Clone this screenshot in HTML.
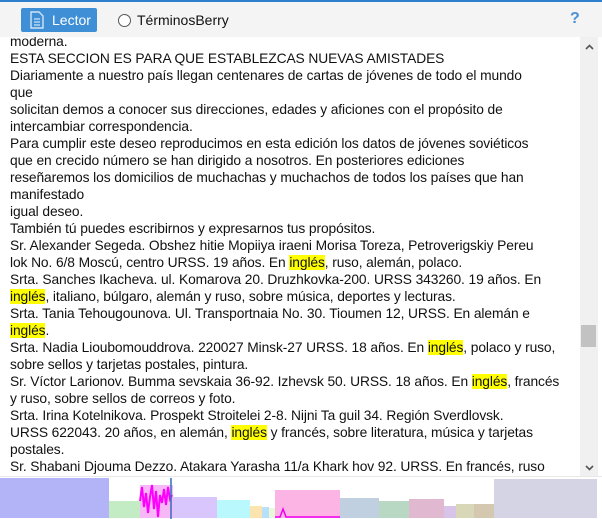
<!DOCTYPE html>
<html><head><meta charset="utf-8"><style>
*{margin:0;padding:0;box-sizing:border-box}
body{width:602px;height:518px;overflow:hidden;background:#fff;font-family:"Liberation Sans",Arial,sans-serif;position:relative}
#top{position:absolute;left:0;top:0;width:602px;height:2px;background:#2f7fcf;z-index:3}
#bar{position:absolute;left:0;top:2px;width:602px;height:35px;background:#f4f4f4;z-index:2}
#btn{position:absolute;left:21px;top:6px;width:76px;height:24px;background:#3e8fd6;border-radius:2px;color:#fff;font-size:14px}
#btn span{position:absolute;left:31px;top:4px}
#radio{position:absolute;left:118px;top:12px;width:13px;height:13px;border:1.5px solid #555;border-radius:50%;background:#fff}
#tb{position:absolute;left:137px;top:10px;font-size:14px;color:#111}
#q{position:absolute;left:570px;top:8px;font-size:16px;font-weight:bold;color:#4a90d9}
#txt{position:absolute;left:10px;top:33px;width:570px;font-size:13.8px;letter-spacing:-0.1px;line-height:17px;color:#111;white-space:nowrap}
.h{background:#ffff00}
#sb{position:absolute;left:580px;top:37px;width:18px;height:439px;background:#f0f0f0}
#thumb{position:absolute;left:581px;top:325px;width:15px;height:22px;background:#c2c2c2}
#bot{position:absolute;left:0;top:476px;width:602px;height:42px;background:#fff;border-top:1px solid #e8e8e8}
.b{position:absolute;bottom:0}
</style></head><body>
<div id="top"></div>
<div id="bar">
<div id="btn"><svg style="position:absolute;left:9px;top:3px" width="14" height="18" viewBox="0 0 14 18"><path d="M1 1h8l4 4v12H1z" fill="none" stroke="#cfe3f5" stroke-width="1.4"/><path d="M4 8h6M4 11h6M4 14h6" stroke="#cfe3f5" stroke-width="1.2"/></svg><span>Lector</span></div>
<div id="radio"></div><div id="tb">TérminosBerry</div>
<div id="q">?</div>
</div>
<div id="txt">
moderna.<br>
ESTA SECCION ES PARA QUE ESTABLEZCAS NUEVAS AMISTADES<br>
Diariamente a nuestro país llegan centenares de cartas de jóvenes de todo el mundo<br>
que<br>
solicitan demos a conocer sus direcciones, edades y aficiones con el propósito de<br>
intercambiar correspondencia.<br>
Para cumplir este deseo reproducimos en esta edición los datos de jóvenes soviéticos<br>
que en crecido número se han dirigido a nosotros. En posteriores ediciones<br>
reseñaremos los domicilios de muchachas y muchachos de todos los países que han<br>
manifestado<br>
igual deseo.<br>
También tú puedes escribirnos y expresarnos tus propósitos.<br>
Sr. Alexander Segeda. Obshez hitie Mopiiya iraeni Morisa Toreza, Petroverigskiy Pereu<br>
lok No. 6/8 Moscú, centro URSS. 19 años. En <span class="h">inglés</span>, ruso, alemán, polaco.<br>
Srta. Sanches Ikacheva. ul. Komarova 20. Druzhkovka-200. URSS 343260. 19 años. En<br>
<span class="h">inglés</span>, italiano, búlgaro, alemán y ruso, sobre música, deportes y lecturas.<br>
Srta. Tania Tehougounova. Ul. Transportnaia No. 30. Tioumen 12, URSS. En alemán e<br>
<span class="h">inglés</span>.<br>
Srta. Nadia Lioubomouddrova. 220027 Minsk-27 URSS. 18 años. En <span class="h">inglés</span>, polaco y ruso,<br>
sobre sellos y tarjetas postales, pintura.<br>
Sr. Víctor Larionov. Bumma sevskaia 36-92. Izhevsk 50. URSS. 18 años. En <span class="h">inglés</span>, francés<br>
y ruso, sobre sellos de correos y foto.<br>
Srta. Irina Kotelnikova. Prospekt Stroitelei 2-8. Nijni Ta guil 34. Región Sverdlovsk.<br>
URSS 622043. 20 años, en alemán, <span class="h">inglés</span> y francés, sobre literatura, música y tarjetas<br>
postales.<br>
Sr. Shabani Djouma Dezzo. Atakara Yarasha 11/a Khark hov 92. URSS. En francés, ruso<br>
</div>
<div id="sb"><svg style="position:absolute;left:5px;top:7px" width="9" height="6"><path d="M1 5l3.5-3.5L8 5" fill="none" stroke="#555" stroke-width="1.6"/></svg><svg style="position:absolute;left:5px;top:428px" width="9" height="6"><path d="M1 1l3.5 3.5L8 1" fill="none" stroke="#555" stroke-width="1.6"/></svg></div>
<div id="thumb"></div>
<div id="bot">
<div class="b" style="left:0;width:109px;height:40px;background:#b3b3f8"></div>
<div class="b" style="left:109px;width:31px;height:17px;background:#c4ecc4"></div>
<div class="b" style="left:140px;width:33px;height:33px;background:#f8b8f8"></div>
<div class="b" style="left:173px;width:44px;height:21px;background:#d9c6fc"></div>
<div class="b" style="left:217px;width:33px;height:18px;background:#b9f8fc"></div>
<div class="b" style="left:250px;width:12px;height:12px;background:#fce4b0"></div>
<div class="b" style="left:262px;width:7px;height:11px;background:#b8e0f8"></div>
<div class="b" style="left:269px;width:6px;height:10px;background:#e8f8d8"></div>
<div class="b" style="left:275px;width:65px;height:28px;background:#fcb4e4"></div>
<div class="b" style="left:340px;width:39px;height:20px;background:#c0d0e0"></div>
<div class="b" style="left:379px;width:30px;height:17px;background:#b8d8c4"></div>
<div class="b" style="left:409px;width:35px;height:19px;background:#e0b8d0"></div>
<div class="b" style="left:444px;width:12px;height:12px;background:#d8c4e8"></div>
<div class="b" style="left:456px;width:18px;height:14px;background:#d8d8b8"></div>
<div class="b" style="left:474px;width:20px;height:14px;background:#d4c8b0"></div>
<div class="b" style="left:494px;width:103px;height:39px;background:#d4d4e4"></div>
<svg style="position:absolute;left:0;top:0" width="602" height="42"><polyline points="140,24 142,10 144,30 146,16 148,36 150,20 152,8 154,32 156,14 158,40 160,18 162,26 164,12 166,28 168,10 170,22 172,18" fill="none" stroke="#f0f" stroke-width="2"/><polyline points="275,40 280,40 283,32 286,40 340,40" fill="none" stroke="#e0e" stroke-width="1.5"/><line x1="171" y1="1" x2="171" y2="42" stroke="#2f6fbf" stroke-width="1.5"/></svg>
</div>
</body></html>
